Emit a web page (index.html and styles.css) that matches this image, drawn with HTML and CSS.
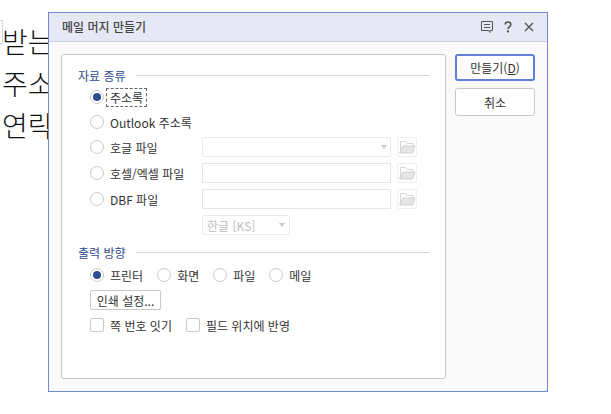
FILE: index.html
```html
<!DOCTYPE html>
<html lang="ko">
<head>
<meta charset="utf-8">
<title>메일 머지 만들기</title>
<link rel="stylesheet" href="styles.css">
</head>
<body>
<main class="doc">
  <div class="caret-box"></div>
  <p class="doc-line">받는</p>
  <p class="doc-line">주소</p>
  <p class="doc-line">연락</p>
</main>

<section class="dialog">
  <header class="titlebar">
    <span class="title">메일 머지 만들기</span>
    <span class="title-icons">
      <svg class="ti" width="14" height="14" viewBox="0 0 14 14"><path d="M1.5 1.5h11v9H10v2l-1.5-2h-7z M4 4.5h6 M4 7.5h6" fill="none" stroke="#555" stroke-width="1"/></svg>
      <svg class="ti" width="14" height="14" viewBox="0 0 14 14"><path d="M4.2 4.4C4.2 2.9 5.3 2 7 2s2.8 .9 2.8 2.4c0 2.2-2.8 2.2-2.8 4.6" fill="none" stroke="#555" stroke-width="1.6"/><rect x="6" y="10.4" width="2" height="2" fill="#555"/></svg>
      <svg class="ti" width="14" height="14" viewBox="0 0 14 14"><path d="M3 3l8 8M11 3l-8 8" fill="none" stroke="#555" stroke-width="1.4"/></svg>
    </span>
  </header>
  <div class="body">
    <div class="panel">
      <div class="legend"><span>자료 종류</span><i class="rule"></i></div>
      <div class="rows">
        <label class="row"><b class="radio on"></b><span class="focus">주소록</span></label>
        <label class="row"><b class="radio"></b><span>Outlook 주소록</span></label>
      </div>
      <div class="rows files">
        <div class="row file">
          <label class="row"><b class="radio"></b><span>호글 파일</span></label>
          <div class="field"><i class="arrow"></i></div>
          <div class="folder"><svg width="18" height="16" viewBox="0 0 18 16"><path d="M2.5 13V2.5h5l1.5 2h6V7" fill="none" stroke="#d4d4d4"/><path d="M5 7h12l-2.5 7H1.5z" fill="#e6e6e6" stroke="#d0d0d0"/></svg></div>
        </div>
        <div class="row file">
          <label class="row"><b class="radio"></b><span>호셀/엑셀 파일</span></label>
          <div class="field square"></div>
          <div class="folder"><svg width="18" height="16" viewBox="0 0 18 16"><path d="M2.5 13V2.5h5l1.5 2h6V7" fill="none" stroke="#d4d4d4"/><path d="M5 7h12l-2.5 7H1.5z" fill="#e6e6e6" stroke="#d0d0d0"/></svg></div>
        </div>
        <div class="row file">
          <label class="row"><b class="radio"></b><span>DBF 파일</span></label>
          <div class="field square"></div>
          <div class="folder"><svg width="18" height="16" viewBox="0 0 18 16"><path d="M2.5 13V2.5h5l1.5 2h6V7" fill="none" stroke="#d4d4d4"/><path d="M5 7h12l-2.5 7H1.5z" fill="#e6e6e6" stroke="#d0d0d0"/></svg></div>
        </div>
        <div class="row file">
          <span></span>
          <div class="combo"><span>한글 [KS]</span><i class="arrow"></i></div>
        </div>
      </div>

      <div class="legend second"><span>출력 방향</span><i class="rule"></i></div>
      <div class="rows output">
        <div class="row wide">
          <label class="row"><b class="radio on"></b><span>프린터</span></label>
          <label class="row"><b class="radio"></b><span>화면</span></label>
          <label class="row"><b class="radio"></b><span>파일</span></label>
          <label class="row"><b class="radio"></b><span>메일</span></label>
        </div>
        <div class="row"><button class="small-btn">인쇄 설정...</button></div>
        <div class="row wide">
          <label class="row"><b class="check"></b><span>쪽 번호 잇기</span></label>
          <label class="row"><b class="check"></b><span>필드 위치에 반영</span></label>
        </div>
      </div>
    </div>
    <div class="actions">
      <button class="btn primary">만들기(<u>D</u>)</button>
      <button class="btn">취소</button>
    </div>
  </div>
</section>
</body>
</html>
```
FILE: styles.css
```css
* { box-sizing: border-box; }
html, body { margin: 0; height: 100%; }
body {
  position: relative;
  overflow: hidden;
  background: #fff;
  font-family: "Noto Sans CJK KR", "Noto Sans", sans-serif;
  font-size: 12px;
  color: #333;
}
.doc { padding: 27px 0 0 2px; }
.caret-box {
  position: absolute;
  left: 0;
  top: 20px;
  width: 3px;
  height: 24px;
  border: 1px solid #d8d8d8;
  border-left: 0;
}
.doc-line {
  margin: 0 0 14px;
  height: 28px;
  line-height: 28px;
  font-size: 28px;
  font-weight: 300;
  color: #111;
}
.dialog {
  position: absolute;
  left: 48px;
  top: 12px;
  width: 500px;
  height: 380px;
  background: #fafafa;
  border: 1px solid #6f8bd3;
  display: flex;
  flex-direction: column;
}
.titlebar {
  height: 29px;
  flex: none;
  background: #e6e9f5;
  border-bottom: 1px solid #c9cfe4;
  display: flex;
  align-items: center;
  justify-content: space-between;
  padding: 0 11px 1px 13px;
}
.title { color: #444; font-weight: 500; }
.title-icons { display: flex; gap: 7px; }
.ti { display: block; }
.body {
  flex: 1;
  display: flex;
  gap: 9px;
  padding: 12px;
}
.panel {
  width: 385px;
  height: 325px;
  background: #fff;
  border: 1px solid #c8c8c8;
  border-radius: 3px;
  padding: 12px 15px 0 16px;
}
.legend {
  display: flex;
  align-items: center;
  gap: 10px;
  height: 16px;
  color: #2f4a8f;
  width: 351px;
}
.legend.second { margin-top: 9px; }
.rule { flex: 1; height: 1px; background: #d6d6d6; }
.rows {
  display: flex;
  flex-direction: column;
  gap: 5px;
  margin: 4px 0 0 12px;
}
.rows.files { margin-top: 5px; gap: 6px; }
.rows.output { margin-top: 5px; gap: 5px; }
.row {
  display: flex;
  align-items: center;
  height: 20px;
  gap: 6px;
}
.wide { gap: 0; }
.wide > .row { margin-right: 14px; }
.file { display: grid; grid-template-columns: 112px 189px 26px; gap: 6px 0; }
.file .folder { margin-left: 6px; width: 20px; }
.radio {
  flex: none;
  width: 14px;
  height: 14px;
  border-radius: 50%;
  border: 1px solid #c9c9c9;
  background: #fff;
  display: grid;
  place-items: center;
}
.radio.on::after {
  content: "";
  width: 8px;
  height: 8px;
  border-radius: 50%;
  background: #2f4d94;
}
.check {
  flex: none;
  width: 14px;
  height: 14px;
  border: 1px solid #c9c9c9;
  border-radius: 2px;
  background: #fff;
}
.focus {
  outline: 1px dashed #666;
  padding: 0 3px;
  margin-left: -3px;
  line-height: 17px;
}
.field {
  height: 20px;
  width: 189px;
  border: 1px solid #ebebeb;
  border-radius: 2px;
  display: flex;
  align-items: center;
  justify-content: flex-end;
  padding-right: 3px;
}
.field.square { border-color: #e6e6e6; border-radius: 0; }
.arrow {
  width: 0;
  height: 0;
  border: 3px solid transparent;
  border-top: 4px solid #c8c8c8;
  border-bottom: 0;
}
.folder {
  height: 20px;
  border: 1px solid #efefef;
  border-radius: 2px;
  display: grid;
  place-items: center;
}
.combo {
  width: 88px;
  height: 20px;
  border: 1px solid #ebebeb;
  border-radius: 2px;
  display: flex;
  align-items: center;
  justify-content: space-between;
  padding: 0 4px;
  color: #bdbdbd;
}
.small-btn {
  width: 71px;
  height: 20px;
  padding: 0;
  background: #fff;
  border: 1px solid #c8c8c8;
  border-radius: 2px;
  font: inherit;
  color: #333;
}
.actions {
  display: flex;
  flex-direction: column;
  gap: 7px;
}
.btn {
  width: 80px;
  height: 28px;
  padding: 0;
  background: #fff;
  border: 1px solid #c8c8c8;
  border-radius: 3px;
  font: inherit;
  color: #333;
}
.btn.primary { height: 27px; border: 2px solid #5f7fd9; }
```
